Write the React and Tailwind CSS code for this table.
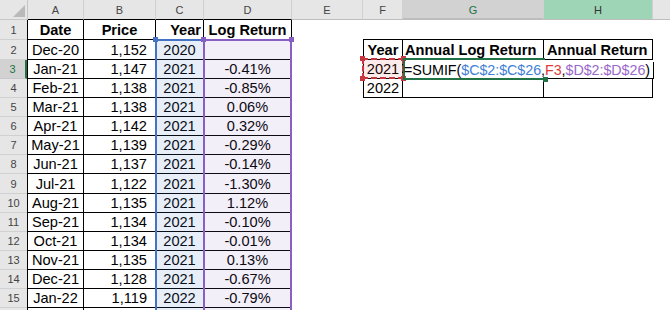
import React from 'react';

const data = [
  ['Dec-20', '1,152', '2020', ''],
  ['Jan-21', '1,147', '2021', '-0.41%'],
  ['Feb-21', '1,138', '2021', '-0.85%'],
  ['Mar-21', '1,138', '2021', '0.06%'],
  ['Apr-21', '1,142', '2021', '0.32%'],
  ['May-21', '1,139', '2021', '-0.29%'],
  ['Jun-21', '1,137', '2021', '-0.14%'],
  ['Jul-21', '1,122', '2021', '-1.30%'],
  ['Aug-21', '1,135', '2021', '1.12%'],
  ['Sep-21', '1,134', '2021', '-0.10%'],
  ['Oct-21', '1,134', '2021', '-0.01%'],
  ['Nov-21', '1,135', '2021', '0.13%'],
  ['Dec-21', '1,128', '2021', '-0.67%'],
  ['Jan-22', '1,119', '2022', '-0.79%'],
];

const headCols = [
  { label: 'A', cls: 'w-[56px] border-b-black' },
  { label: 'B', cls: 'w-[72px] border-b-black' },
  { label: 'C', cls: 'w-[48px] border-b-black' },
  { label: 'D', cls: 'w-[88px] border-b-black' },
  { label: 'E', cls: 'w-[71px]' },
  { label: 'F', cls: 'w-[40px]' },
  { label: 'G', cls: 'w-[141px] bg-[#d2d2d2] text-[#217346] border-b-2 border-b-[#217346]' },
  { label: 'H', cls: 'w-[109px] bg-[#9fd5b7] text-[#333]' },
];

const cell = 'shrink-0 flex items-end pb-[1px] leading-none whitespace-nowrap';

function rowHeight(n) {
  if (n === 1 || n === 2 || n === 9) return 'h-[20px]';
  return 'h-[19px]';
}

// small square drag handle on a range border corner
function Handle({ pos, color }) {
  return <div className={`absolute w-[5px] h-[5px] ${pos} ${color}`} />;
}

function RightCells({ n }) {
  if (n === 1) {
    return (
      <>
        <div className={`${cell} w-[40px] border-b border-black`} />
        <div className={`${cell} w-[141px] border-b border-black`} />
        <div className={`${cell} w-[109px] border-b border-black`} />
      </>
    );
  }
  if (n === 2) {
    return (
      <>
        <div className={`${cell} w-[40px] border-l border-r border-b border-black justify-center font-bold`}>Year</div>
        <div className={`${cell} w-[141px] border-r border-b border-black pl-[2px] font-bold`}>Annual Log Return</div>
        <div className={`${cell} w-[109px] border-r border-b border-black pl-[3px] font-bold`}>Annual Return</div>
      </>
    );
  }
  if (n === 3) {
    return (
      <>
        <div className={`${cell} w-[40px] border-l border-r border-b border-black justify-center`}>2021</div>
        <div className={`${cell} w-[141px] border-b border-black pl-[1px] overflow-visible`}>
          <span className="relative z-10 flex items-end text-[14.3px] tracking-[-0.05px]">
            <span>
              =SUMIF(<span className="text-[#3f7fd6]">$C$2:$C$26</span>,<span className="text-[#e03c3c]">F3</span>,<span className="text-[#9a68cc]">$D$2:$D$26</span>)
            </span>
            <span className="ml-[3px] mb-[-2px] w-px h-[17px] bg-black" />
          </span>
        </div>
        <div className={`${cell} w-[109px] border-b border-black`} />
      </>
    );
  }
  if (n === 4) {
    return (
      <>
        <div className={`${cell} w-[40px] border-l border-r border-b border-black justify-center`}>2022</div>
        <div className={`${cell} w-[141px] border-r border-b border-black`} />
        <div className={`${cell} w-[109px] border-r border-b border-black`} />
      </>
    );
  }
  return (
    <>
      <div className="shrink-0 w-[40px]" />
      <div className="shrink-0 w-[141px]" />
      <div className="shrink-0 w-[109px]" />
    </>
  );
}

function Row({ n, values, bold, hideNumber }) {
  const [date, price, year, ret] = values;
  const active = n === 3;
  return (
    <div className={`flex ${rowHeight(n)}`}>
      {/* Row number */}
      <div
        className={
          active
            ? `${cell} w-[27px] justify-center pb-[3px] text-[11px] bg-[#d2d2d2] text-[#217346] border-b border-[#c8c8c8] border-r-2 border-r-[#217346]`
            : `${cell} w-[27px] justify-center pb-[3px] text-[11px] bg-[#e6e6e6] text-[#444] border-b border-[#d0d0d0]`
        }
      >
        {hideNumber ? '' : n}
      </div>
      <div className={`${cell} w-[57px] border-l border-r border-b border-black justify-center ${bold ? 'font-bold' : ''}`}>{date}</div>
      <div className={`${cell} w-[72px] border-r border-b border-black ${bold ? 'justify-center font-bold' : 'justify-end pr-[8px]'}`}>{price}</div>
      <div className={`${cell} w-[48px] border-r border-b border-black ${bold ? 'justify-end pr-[2px] font-bold' : 'justify-center'}`}>{year}</div>
      <div className={`${cell} w-[88px] border-r border-b border-black justify-center ${bold ? 'font-bold' : ''}`}>{ret}</div>
      <div className="shrink-0 w-[71px]" />
      <RightCells n={n} />
      <div className="flex-1" />
    </div>
  );
}

export default function App() {
  return (
    <div className="relative w-[670px] h-[310px] overflow-hidden bg-white text-black text-[14.6px] font-['Liberation_Sans',Arial,sans-serif]">
      {/* Column headers */}
      <div className="flex h-[20px] bg-[#e6e6e6] text-[11px] text-[#444] leading-none">
        <div className="relative shrink-0 w-[28px] border-r border-b border-[#c6c6c6]">
          <svg className="absolute left-0 top-0" width="28" height="20" viewBox="0 0 28 20">
            <polygon points="25,5 25,17 13,17" fill="#b9b9b9" />
          </svg>
        </div>
        {headCols.map((c) => (
          <div
            key={c.label}
            className={`shrink-0 flex items-center justify-center pt-[2px] border-r border-b border-r-[#d0d0d0] border-b-[#bdbdbd] ${c.cls}`}
          >
            {c.label}
          </div>
        ))}
        <div className="flex-1 border-b border-[#bdbdbd]" />
      </div>

      <Row n={1} values={['Date', 'Price', 'Year', 'Log Return']} bold />
      {data.map((v, i) => (
        <Row key={i} n={i + 2} values={v} />
      ))}
      <Row n={16} values={['', '', '', '']} hideNumber />

      {/* Range highlight: $C$2:$C$26 */}
      <div className="absolute left-[155px] top-[39px] w-[50px] h-[300px] border-2 border-[#4472c4] bg-[#4472c4]/[0.12]">
        <Handle pos="-left-[4px] -top-[4px]" color="bg-[#4472c4]" />
      </div>

      {/* Range highlight: $D$2:$D$26 */}
      <div className="absolute left-[203px] top-[39px] w-[89px] h-[300px] border-2 border-[#8a5fc4] bg-[#8a5fc4]/[0.1]">
        <Handle pos="-left-[4px] -top-[4px]" color="bg-[#8a5fc4]" />
        <Handle pos="-right-[4px] -top-[4px]" color="bg-[#8a5fc4]" />
      </div>

      {/* Reference: F3 */}
      <div className="absolute left-[362px] top-[58px] w-[42px] h-[21px] border-2 border-dashed border-[#c8363f] bg-[#e03c3c]/[0.1]">
        <Handle pos="-left-[4px] -top-[4px]" color="bg-[#c8363f]" />
        <Handle pos="-right-[4px] -top-[4px]" color="bg-[#c8363f]" />
        <Handle pos="-left-[4px] -bottom-[4px]" color="bg-[#c8363f]" />
        <Handle pos="-right-[4px] -bottom-[4px]" color="bg-[#c8363f]" />
      </div>

      {/* Active cell in edit mode: G3 */}
      <div className="absolute left-[403px] top-[58px] w-[142px] h-[22px] border-y-2 border-l-2 border-[#217346]">
        <Handle pos="-right-[3px] -bottom-[4px]" color="bg-[#217346]" />
      </div>
    </div>
  );
}
